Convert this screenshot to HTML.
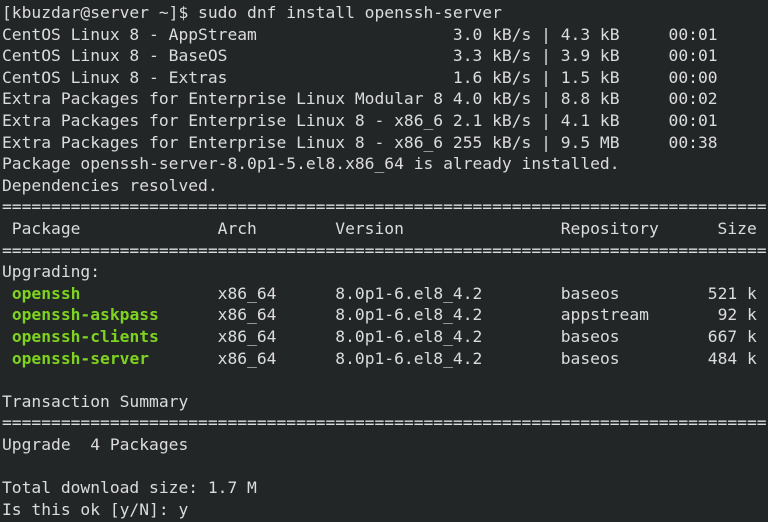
<!DOCTYPE html>
<html><head><meta charset="utf-8"><style>
html,body{margin:0;padding:0;background:#232627;width:768px;height:522px;overflow:hidden}
pre{margin:0;padding:2px 0 0 2px;font-family:"DejaVu Sans Mono","Liberation Mono",monospace;font-size:16.3px;line-height:21.6px;color:#dcdcdc;white-space:pre;overflow:hidden;width:766px}
b{color:#7ed321;font-weight:bold}
</style></head><body><pre>[kbuzdar@server ~]$ sudo dnf install openssh-server
CentOS Linux 8 - AppStream                    3.0 kB/s | 4.3 kB     00:01
CentOS Linux 8 - BaseOS                       3.3 kB/s | 3.9 kB     00:01
CentOS Linux 8 - Extras                       1.6 kB/s | 1.5 kB     00:00
Extra Packages for Enterprise Linux Modular 8 4.0 kB/s | 8.8 kB     00:02
Extra Packages for Enterprise Linux 8 - x86_6 2.1 kB/s | 4.1 kB     00:01
Extra Packages for Enterprise Linux 8 - x86_6 255 kB/s | 9.5 MB     00:38
Package openssh-server-8.0p1-5.el8.x86_64 is already installed.
Dependencies resolved.
==============================================================================
 Package              Arch        Version                Repository      Size
==============================================================================
Upgrading:
 <b>openssh</b>              x86_64      8.0p1-6.el8_4.2        baseos         521 k
 <b>openssh-askpass</b>      x86_64      8.0p1-6.el8_4.2        appstream       92 k
 <b>openssh-clients</b>      x86_64      8.0p1-6.el8_4.2        baseos         667 k
 <b>openssh-server</b>       x86_64      8.0p1-6.el8_4.2        baseos         484 k

Transaction Summary
==============================================================================
Upgrade  4 Packages

Total download size: 1.7 M
Is this ok [y/N]: y</pre></body></html>
